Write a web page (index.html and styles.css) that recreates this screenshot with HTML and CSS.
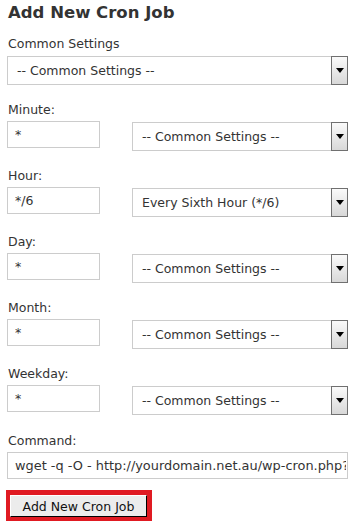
FILE: index.html
```html
<!DOCTYPE html>
<html>
<head>
<title>Add New Cron Job</title>
<meta http-equiv="Content-Type" content="text/html; charset=utf-8">
<link rel="stylesheet" href="styles.css">
</head>
<body>
<h2 class="tit">Add New Cron Job</h2>
<form class="cronform">
	<label class="lbl first">Common Settings</label>
	<div class="sel wide">
		<select><option>-- Common Settings --</option></select>
		<span class="arrow"><svg width="8" height="5" viewBox="0 0 8 5"><path d="M0 0H8L4 5Z" fill="#000"/></svg></span>
	</div>

	<div class="group">
		<label class="lbl">Minute:</label>
		<div class="row">
			<input class="txt" type="text" value="*">
			<div class="sel">
				<select><option>-- Common Settings --</option></select>
				<span class="arrow"><svg width="8" height="5" viewBox="0 0 8 5"><path d="M0 0H8L4 5Z" fill="#000"/></svg></span>
			</div>
		</div>
	</div>

	<div class="group">
		<label class="lbl">Hour:</label>
		<div class="row">
			<input class="txt" type="text" value="*/6">
			<div class="sel">
				<select><option>Every Sixth Hour (*/6)</option></select>
				<span class="arrow"><svg width="8" height="5" viewBox="0 0 8 5"><path d="M0 0H8L4 5Z" fill="#000"/></svg></span>
			</div>
		</div>
	</div>

	<div class="group">
		<label class="lbl">Day:</label>
		<div class="row">
			<input class="txt" type="text" value="*">
			<div class="sel">
				<select><option>-- Common Settings --</option></select>
				<span class="arrow"><svg width="8" height="5" viewBox="0 0 8 5"><path d="M0 0H8L4 5Z" fill="#000"/></svg></span>
			</div>
		</div>
	</div>

	<div class="group">
		<label class="lbl">Month:</label>
		<div class="row">
			<input class="txt" type="text" value="*">
			<div class="sel">
				<select><option>-- Common Settings --</option></select>
				<span class="arrow"><svg width="8" height="5" viewBox="0 0 8 5"><path d="M0 0H8L4 5Z" fill="#000"/></svg></span>
			</div>
		</div>
	</div>

	<div class="group">
		<label class="lbl">Weekday:</label>
		<div class="row">
			<input class="txt" type="text" value="*">
			<div class="sel">
				<select><option>-- Common Settings --</option></select>
				<span class="arrow"><svg width="8" height="5" viewBox="0 0 8 5"><path d="M0 0H8L4 5Z" fill="#000"/></svg></span>
			</div>
		</div>
	</div>

	<div class="group last">
		<label class="lbl">Command:</label>
		<input class="txt cmd" type="text" value="wget -q -O - http://yourdomain.net.au/wp-cron.php?doing_wp_cron">
	</div>

	<div class="hilite">
		<input type="button" class="btn" value="Add New Cron Job">
	</div>
</form>
</body>
</html>
```

FILE: styles.css
```css
html, body {
	background: #fff;
}
body {
	margin: 0;
	padding: 0 6px 0 7px;
	font-family: "DejaVu Sans", Verdana, sans-serif;
	font-size: 12.5px;
	color: #333;
}
.tit {
	margin: 2px 0 0 1px;
	font-size: 16.5px;
	line-height: 22px;
	font-weight: bold;
	color: #333;
}
.lbl {
	display: block;
	margin: 0 0 3px 1px;
	line-height: 16px;
}
.lbl.first {
	margin-top: 12px;
	margin-bottom: 4px;
}
.group {
	margin-top: 17px;
}
.group + .group {
	margin-top: 17px;
}
.group.last {
	margin-top: 18px;
}
.row {
	display: flex;
	align-items: flex-start;
	gap: 32px;
}
.txt {
	box-sizing: border-box;
	width: 93px;
	height: 27px;
	margin: 0;
	padding: 0 7px;
	border: 1px solid #ccc;
	font-family: "DejaVu Sans", Verdana, sans-serif;
	font-size: 12.5px;
	color: #333;
	background: #fff;
	outline: none;
}
.txt.cmd {
	width: 341px;
	padding-right: 1px;
	font-size: 12.9px;
}
.sel {
	position: relative;
	flex: 1;
	height: 29px;
	margin-top: 1px;
}
.sel.wide {
	width: 341px;
	margin-top: 0;
}
.sel select {
	box-sizing: border-box;
	width: 100%;
	height: 29px;
	margin: 0;
	padding: 0 20px 0 9px;
	border: 1px solid #ccc;
	border-radius: 0;
	-webkit-appearance: none;
	appearance: none;
	background: #fff;
	font-family: "DejaVu Sans", Verdana, sans-serif;
	font-size: 12.5px;
	color: #333;
}
.arrow {
	position: absolute;
	top: 0;
	right: 0;
	width: 17px;
	height: 29px;
	box-sizing: border-box;
	border: 1px solid #707070;
	background: linear-gradient(#fafafa, #d8d8d8);
	display: flex;
	align-items: center;
	justify-content: center;
	pointer-events: none;
}
.hilite {
	display: inline-block;
	margin-top: 11px;
	margin-left: -1px;
	padding: 5px 5px 4px 4px;
	background: #e01a22;
}
.btn {
	display: block;
	box-sizing: border-box;
	width: 137px;
	height: 22px;
	margin: 0;
	padding: 0;
	border: 1px solid;
	border-color: #fff #000 #000 #fff;
	border-radius: 0;
	background: #ececec;
	font-family: "DejaVu Sans", Verdana, sans-serif;
	font-size: 12.5px;
	color: #111;
}
```
